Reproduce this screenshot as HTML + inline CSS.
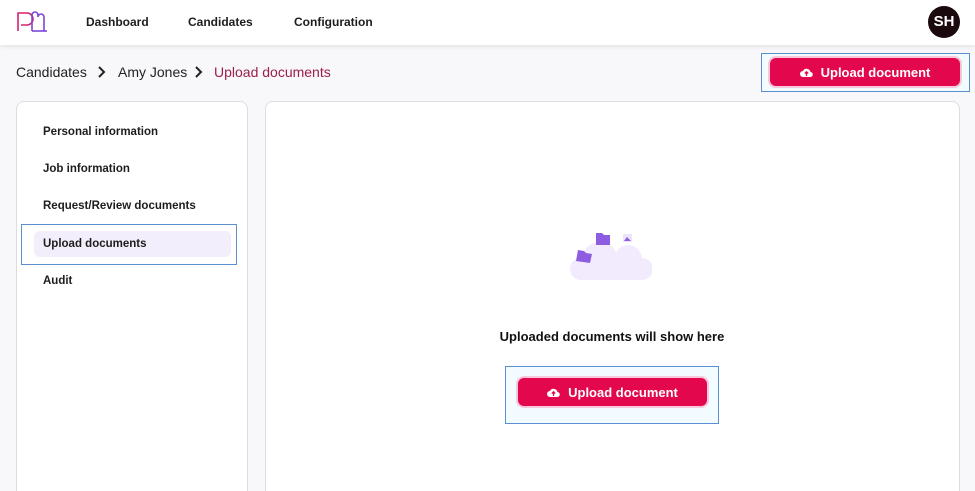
<!DOCTYPE html>
<html><head><style>
*{box-sizing:border-box;margin:0;padding:0}
html,body{width:975px;height:491px;overflow:hidden}
body{background:#f8f7fa;font-family:"Liberation Sans",sans-serif;position:relative;color:#1a1a1a}
.hdr{position:absolute;left:0;top:0;width:975px;height:45px;background:#fff;box-shadow:0 2px 4px rgba(0,0,0,.08)}
.nav{position:absolute;top:15px;font-size:12px;font-weight:bold;color:#1d1d1d;white-space:nowrap}
.av{position:absolute;left:928px;top:6px;width:32px;height:32px;border-radius:50%;background:#1a0a0e;color:#fff;font-weight:bold;font-size:15px;text-align:center;line-height:32px}
.bc{position:absolute;top:64px;font-size:14px;color:#222;white-space:nowrap}
.panel{position:absolute;top:101px;background:#fff;border:1px solid #dedde2;border-bottom:none;border-radius:8px 8px 0 0;height:390px}
.item{position:absolute;left:43px;font-size:11.5px;font-weight:bold;color:#1d1d1d;white-space:nowrap}
.outl{position:absolute;border:1px solid #5a8fd0;background:#f2fbff}
.btn{position:absolute;background:#e3084e;border-radius:6px;color:#fff;font-weight:bold;font-size:13px;display:flex;align-items:center;justify-content:center;gap:8px;box-shadow:0 0 0 2px #f7c7dc;white-space:nowrap}
</style></head><body>
<div class="hdr">
<svg style="position:absolute;left:16px;top:11px" width="33" height="22" viewBox="0 0 33 22"><path d="M2 20V2h9a6 6 0 0 1 0 12H5" fill="none" stroke="#d6226a" stroke-width="1.6"/><path d="M16 20V4a3 3 0 0 1 6 0v2a3 3 0 0 1 6 0v14" fill="none" stroke="#7b46d8" stroke-width="1.6"/><path d="M16 20h15" stroke="#7b46d8" stroke-width="1.6"/></svg>
<div class="nav" style="left:86px">Dashboard</div>
<div class="nav" style="left:188px">Candidates</div>
<div class="nav" style="left:294px">Configuration</div>
<div class="av">SH</div>
</div>
<div class="bc" style="left:16px">Candidates</div>
<svg style="position:absolute;left:97px;top:66px" width="10" height="12" viewBox="0 0 10 12"><path d="M2 1l5 5-5 5" fill="none" stroke="#222" stroke-width="2"/></svg>
<div class="bc" style="left:118px">Amy Jones</div>
<svg style="position:absolute;left:194px;top:66px" width="10" height="12" viewBox="0 0 10 12"><path d="M2 1l5 5-5 5" fill="none" stroke="#222" stroke-width="2"/></svg>
<div class="bc" style="left:214px;color:#9c1e4e">Upload documents</div>
<div class="outl" style="left:761px;top:53px;width:209px;height:39px"></div>
<div class="btn" style="left:770px;top:58px;width:190px;height:28px"><svg width="13" height="11" viewBox="0 0 13 11"><path d="M3 10a3 3 0 0 1 0-6 4 4 0 0 1 7.5 1A2.5 2.5 0 0 1 10 10z" fill="#fff"/><path d="M6.5 9V5M4.8 6.5l1.7-1.7 1.7 1.7" stroke="#e3084e" stroke-width="1.3" fill="none"/></svg>Upload document</div>
<div class="panel" style="left:16px;width:232px"></div>
<div class="panel" style="left:265px;width:695px"></div>
<div class="item" style="top:126px">Personal information</div>
<div class="item" style="top:163px">Job information</div>
<div class="item" style="top:200px">Request/Review documents</div>
<div class="outl" style="left:21px;top:224px;width:216px;height:41px;background:#fff"></div>
<div style="position:absolute;left:34px;top:231px;width:197px;height:26px;background:#f3eefb;border-radius:6px"></div>
<div class="item" style="top:238px">Upload documents</div>
<div class="item" style="top:275px">Audit</div>
<svg style="position:absolute;left:568px;top:228px" width="84" height="56" viewBox="0 0 84 56"><path d="M12 52a11 11 0 0 1 2-22 18 18 0 0 1 34-6 14 14 0 0 1 26 6 11 11 0 0 1 0 22z" fill="#f1ebfd"/><path d="M28 5h6l2 2h6v10H28z" fill="#8e5ce0"/><path d="M10 22l6 1 2 2 6 1-2 9-14-2z" fill="#8e5ce0"/><rect x="55" y="6" width="9" height="8" fill="#ece4fb"/><path d="M56 13l3-4 4 4z" fill="#8e5ce0"/></svg>
<div style="position:absolute;left:462px;top:329px;width:300px;text-align:center;font-size:13px;font-weight:bold;color:#111;white-space:nowrap">Uploaded documents will show here</div>
<div class="outl" style="left:505px;top:366px;width:214px;height:58px"></div>
<div class="btn" style="left:518px;top:378px;width:189px;height:28px"><svg width="13" height="11" viewBox="0 0 13 11"><path d="M3 10a3 3 0 0 1 0-6 4 4 0 0 1 7.5 1A2.5 2.5 0 0 1 10 10z" fill="#fff"/><path d="M6.5 9V5M4.8 6.5l1.7-1.7 1.7 1.7" stroke="#e3084e" stroke-width="1.3" fill="none"/></svg>Upload document</div>
</body></html>
